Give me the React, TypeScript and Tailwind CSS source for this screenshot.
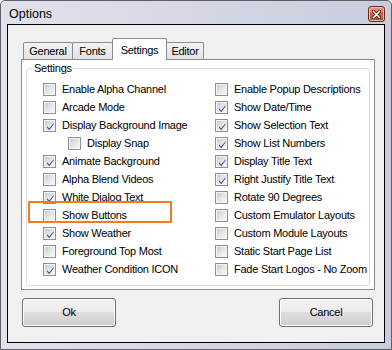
import React from 'react';

type Item = { label: string; checked?: boolean; indent?: boolean; highlight?: boolean };

const leftItems: Item[] = [
  { label: 'Enable Alpha Channel' },
  { label: 'Arcade Mode' },
  { label: 'Display Background Image', checked: true },
  { label: 'Display Snap', indent: true },
  { label: 'Animate Background', checked: true },
  { label: 'Alpha Blend Videos' },
  { label: 'White Dialog Text', checked: true },
  { label: 'Show Buttons', highlight: true },
  { label: 'Show Weather', checked: true },
  { label: 'Foreground Top Most' },
  { label: 'Weather Condition ICON', checked: true },
];

const rightItems: Item[] = [
  { label: 'Enable Popup Descriptions' },
  { label: 'Show Date/Time', checked: true },
  { label: 'Show Selection Text', checked: true },
  { label: 'Show List Numbers', checked: true },
  { label: 'Display Title Text', checked: true },
  { label: 'Right Justify Title Text', checked: true },
  { label: 'Rotate 90 Degrees' },
  { label: 'Custom Emulator Layouts' },
  { label: 'Custom Module Layouts' },
  { label: 'Static Start Page List' },
  { label: 'Fade Start Logos - No Zoom' },
];

function CheckBox({ checked }: { checked?: boolean }) {
  return (
    <span className="relative flex h-[13px] w-[13px] shrink-0 border border-[#8e8f8f] bg-[#f4f4f4] p-[1px]">
      <span className="block h-full w-full bg-gradient-to-br from-[#c9ccd2] via-[#e4e5e7] to-[#f7f7f7]" />
      {checked && (
        <svg className="absolute left-[1px] top-[1px]" width="11" height="11" viewBox="0 0 11 11">
          <path d="M2 5.2 L4.2 7.6 L8.6 2.2 L8.6 3.6 L4.2 9.2 L2 6.8 Z" fill="#3f5189" />
        </svg>
      )}
    </span>
  );
}

function Row({ item }: { item: Item }) {
  return (
    <div className={`relative flex h-[18px] items-center gap-[6px] ${item.indent ? 'pl-[25px]' : ''}`}>
      <CheckBox checked={item.checked} />
      <span className="whitespace-nowrap">{item.label}</span>
      {item.highlight && (
        <span className="absolute left-[-15px] top-[-5px] h-[22px] w-[144px] border-2 border-[#f47b20]" />
      )}
    </div>
  );
}

function Tab({ label, selected, width }: { label: string; selected?: boolean; width: string }) {
  if (selected) {
    return (
      <div className={`relative z-10 -mb-px -ml-px flex h-[22px] ${width} items-start justify-center rounded-t-[2px] border border-b-0 border-[#898c95] bg-white pt-[3px]`}>
        {label}
      </div>
    );
  }
  return (
    <div className={`-ml-px flex h-[17px] ${width} items-center justify-center rounded-t-[2px] border border-b-0 border-[#898c95] bg-gradient-to-b from-[#f3f3f3] to-[#e2e2e2] first:ml-0`}>
      {label}
    </div>
  );
}

function Button({ label }: { label: string }) {
  return (
    <button className="relative flex h-[29px] w-[94px] items-center justify-center overflow-hidden rounded-[3px] border border-[#707070] bg-[linear-gradient(#f2f2f2_0%,#ebebeb_50%,#dddddd_50%,#cfcfcf_100%)] shadow-[inset_0_0_0_1px_#fcfcfc]">
      {label}
    </button>
  );
}

export default function App() {
  return (
    <div
      className="flex h-[350px] w-[392px] flex-col rounded-t-[5px] border border-[#5e5e66] bg-gradient-to-r from-[#e1e2ec] to-[#c9ccdd] text-[11px] tracking-[-0.25px] text-black"
      style={{ fontFamily: '"Liberation Sans", Arial, sans-serif' }}
    >
      <div className="flex h-[23px] shrink-0 items-start justify-between pl-[8px] pr-[6px]">
        <span className="pt-[4px] text-[12.5px] tracking-normal">Options</span>
        <span className="mt-[5px] flex h-[16px] w-[17px] items-center justify-center rounded-[3px] border border-[#6e2a1c] bg-gradient-to-b from-[#eaa18b] via-[#d35f43] to-[#c2452b] shadow-[inset_0_0_0_1px_#f0b7a4]">
          <svg width="9" height="9" viewBox="0 0 9 9">
            <path d="M1.5 1.5 L7.5 7.5 M7.5 1.5 L1.5 7.5" stroke="#4a1a10" strokeWidth="3.2" strokeLinecap="square" />
            <path d="M1.5 1.5 L7.5 7.5 M7.5 1.5 L1.5 7.5" stroke="#ffffff" strokeWidth="1.6" strokeLinecap="square" />
          </svg>
        </span>
      </div>
      <div className="flex flex-1 flex-col px-[6px] pb-[6px]">
        <div className="flex flex-1 flex-col border border-black bg-[#f0f0f0]">
          <div className="ml-[13px] mt-[14px] flex h-[20px] items-end pl-[2px]">
            <Tab label="General" width="w-[50px]" />
            <Tab label="Fonts" width="w-[41px]" />
            <Tab label="Settings" width="w-[55px]" selected />
            <Tab label="Editor" width="w-[38px]" />
          </div>
          <div className="ml-[13px] h-[231px] w-[354px] border border-[#898c95] bg-white px-[4px] pt-[8px]">
            <div className="relative h-[218px] rounded-[3px] border border-[#d5dfe5] pl-[16px] pt-[11px]">
              <span className="absolute left-[6px] top-[-8px] bg-white px-[1px] leading-[14px]">Settings</span>
              <div className="grid grid-cols-[172px_1fr]">
                <div className="flex flex-col">
                  {leftItems.map((it) => (
                    <Row key={it.label} item={it} />
                  ))}
                </div>
                <div className="flex flex-col">
                  {rightItems.map((it) => (
                    <Row key={it.label} item={it} />
                  ))}
                </div>
              </div>
            </div>
          </div>
          <div className="mt-[8px] flex justify-between pl-[14px] pr-[11px]">
            <Button label="Ok" />
            <Button label="Cancel" />
          </div>
        </div>
      </div>
    </div>
  );
}
